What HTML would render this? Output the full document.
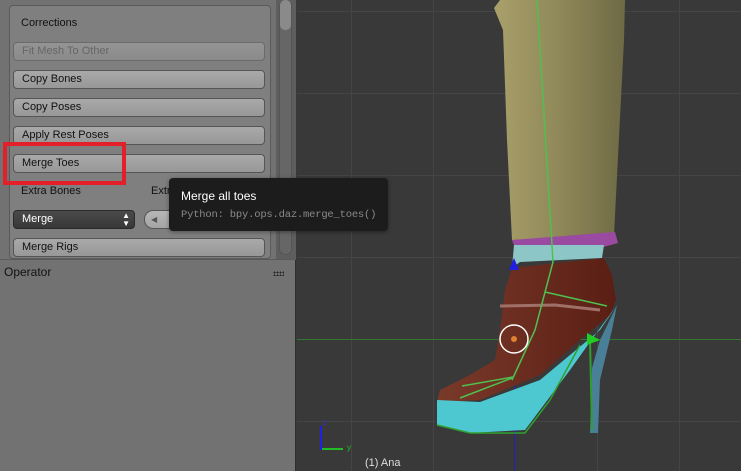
<!DOCTYPE html>
<html><head><style>
*{margin:0;padding:0;box-sizing:border-box}
body{width:741px;height:471px;overflow:hidden;background:#393939;font-family:"Liberation Sans","DejaVu Sans",sans-serif;font-size:11px;position:relative}
.abs{position:absolute}
#left{left:0;top:0;width:296px;height:471px;background:#727272;border-right:1px solid #2e2e2e}
#box{left:9px;top:5px;width:262px;height:254px;background:#7f7f7f;border:1px solid #5a5a5a;border-radius:4px}
.btn{position:absolute;left:13px;width:252px;height:19px;border:1px solid #555;border-radius:4px;background:linear-gradient(#a9a9a9,#989898);color:#111;padding-left:8px;line-height:17px;font-size:11px}
.lbl{position:absolute;color:#111;font-size:11px}
</style></head><body>
<div id="left" class="abs"></div>
<div class="abs" style="left:276px;top:0;width:20px;height:260px;background:#5e5e5e"></div>
<div class="abs" style="left:279px;top:0;width:13px;height:255px;background:#666;border-radius:6px;border:1px solid #555"></div>
<div class="abs" style="left:280px;top:0;width:11px;height:30px;background:#8a8a8a;border-radius:5px"></div>
<div id="box" class="abs"></div>
<div class="lbl" style="left:21px;top:17px">Corrections</div>
<div class="btn" style="top:42px;color:#666;background:linear-gradient(#949494,#8a8a8a);border-color:#6a6a6a">Fit Mesh To Other</div>
<div class="btn" style="top:70px">Copy Bones</div>
<div class="btn" style="top:98px">Copy Poses</div>
<div class="btn" style="top:126px">Apply Rest Poses</div>
<div class="btn" style="top:154px">Merge Toes</div>
<div class="lbl" style="left:21px;top:185px">Extra Bones</div>
<div class="lbl" style="left:151px;top:185px">Extra Layer</div>
<div class="abs" style="left:13px;top:210px;width:122px;height:19px;border:1px solid #2a2a2a;border-radius:4px;background:linear-gradient(#4a4a4a,#383838);color:#fff;padding-left:8px;line-height:17px">Merge<span style="position:absolute;right:4px;top:0;font-size:8px;line-height:8px;top:1px">▲<br>▼</span></div>
<div class="abs" style="left:144px;top:210px;width:121px;height:19px;border:1px solid #555;border-radius:9px;background:linear-gradient(#b8b8b8,#a4a4a4);color:#555;padding-left:6px;line-height:17px;font-size:8px">◀</div>
<div class="btn" style="top:238px">Merge Rigs</div>
<div class="abs" style="left:0;top:259px;width:296px;height:1px;background:#5a5a5a"></div>
<div class="lbl" style="left:4px;top:265px;font-size:12px">Operator</div>
<div class="abs" style="left:273px;top:271px;width:11px;height:5px;background-image:radial-gradient(#222 40%,transparent 45%);background-size:3px 3px"></div>
<div class="abs" style="left:3px;top:142px;width:123px;height:43px;border:4px solid #e3202a"></div>

<svg class="abs" style="left:297px;top:0" width="444" height="471" viewBox="297 0 444 471">
<g stroke="#454545" stroke-width="1">
<line x1="351.5" y1="0" x2="351.5" y2="471"/><line x1="433.5" y1="0" x2="433.5" y2="471"/><line x1="597.5" y1="0" x2="597.5" y2="471"/><line x1="679.5" y1="0" x2="679.5" y2="471"/>
<line x1="297" y1="11.5" x2="741" y2="11.5"/><line x1="297" y1="93.5" x2="741" y2="93.5"/><line x1="297" y1="175.5" x2="741" y2="175.5"/><line x1="297" y1="257.5" x2="741" y2="257.5"/><line x1="297" y1="421.5" x2="741" y2="421.5"/>
</g>
<line x1="297" y1="339.5" x2="741" y2="339.5" stroke="#2f7a2f"/>
<line x1="514.5" y1="260" x2="514.5" y2="471" stroke="#2020c0"/>
<defs><linearGradient id="tr" x1="0" x2="1"><stop offset="0" stop-color="#a9a06a"/><stop offset=".5" stop-color="#8f8858"/><stop offset="1" stop-color="#6e6a45"/></linearGradient>
<linearGradient id="bt" x1="0" x2="1"><stop offset="0" stop-color="#7a3a2a"/><stop offset="1" stop-color="#5a1e14"/></linearGradient></defs>
<path d="M500 0 L625 0 L624 40 L614 235 L512 240 L507 140 L503 30 L494 8 Z" fill="url(#tr)"/>
<path d="M512 240 L615 232 L618 243 L600 248 L515 248 Z" fill="#9a4aa0"/>
<path d="M514 245 L604 245 L602 258 L520 262 L512 268 Z" fill="#8cc6c6"/>
<path d="M512 268 L604 258 L612 275 L616 300 L610 315 L580 340 L540 375 L480 400 L437 402 L440 390 L470 375 L495 360 L500 330 L505 290 Z" fill="url(#bt)"/>
<path d="M500 306 L555 305 L600 310" stroke="#a07068" stroke-width="3" fill="none"/>
<path d="M617 305 L595 335 L570 370 L540 410 L525 430 L470 433 L437 425 L437 400 L480 402 L540 380 L600 330 Z" fill="#4ec8d0"/>
<path d="M437 425 L470 433 L525 433 L550 400 L580 345" stroke="#2fa02f" stroke-width="1.5" fill="none"/>
<path d="M617 305 L600 340 L592 368 L590 433 L598 433 L600 380 L612 330 Z" fill="#4a7f98"/>
<path d="M590 340 L592 430" stroke="#2fa02f" stroke-width="2" fill="none"/>
<polygon points="587,333 600,340 587,345" fill="#22cc22"/>
<polygon points="509,270 514,258 519,270" fill="#2020e0"/>
<g stroke="#4fc04f" stroke-width="1.5" fill="none">
<path d="M537 0 L553 262 L535 330 L512 380"/><path d="M545 292 L607 306"/><path d="M462 386 L513 377"/><path d="M460 398 L512 378"/>
</g>
<circle cx="514" cy="339" r="14" stroke="#fff" stroke-width="1.5" fill="none"/>
<circle cx="514" cy="339" r="3" fill="#e08030"/>
<path d="M321 426 L321 449 L343 449" stroke="#2020e0" stroke-width="2" fill="none"/>
<path d="M322 449 L343 449" stroke="#22bb22" stroke-width="2"/>
<text x="323" y="425" fill="#3030e0" font-size="8" font-family="Liberation Sans">z</text>
<text x="347" y="450" fill="#22bb22" font-size="8" font-family="Liberation Sans">y</text>
<text x="365" y="466" fill="#ddd" font-size="11" font-family="Liberation Sans">(1) Ana</text>
</svg>

<div class="abs" style="left:169px;top:178px;width:219px;height:53px;background:#1c1c1c;border-radius:4px;box-shadow:0 1px 4px rgba(0,0,0,.4)"></div>
<div class="abs" style="left:181px;top:189px;color:#fff;font-size:12px">Merge all toes</div>
<div class="abs" style="left:181px;top:209px;color:#8a8a8a;font-size:10.5px;letter-spacing:-0.2px;font-family:'Liberation Mono','DejaVu Sans Mono',monospace">Python: bpy.ops.daz.merge_toes()</div>
</body></html>
